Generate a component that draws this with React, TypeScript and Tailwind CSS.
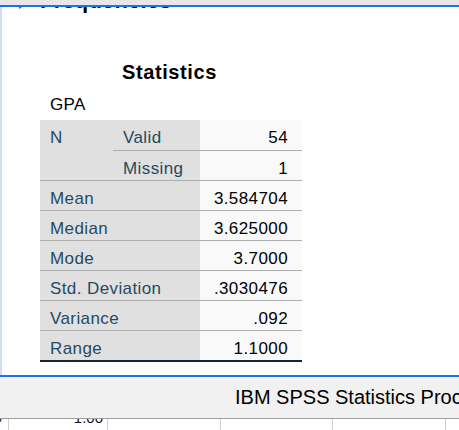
import React from "react";

const labelCls = "text-[#264a60] text-[17px] tracking-[0.4px] leading-[22px] pt-[7px]";
const valCls = "text-[#010205] text-[17px] tracking-[0.4px] leading-[22px] pt-[7px] text-right pr-[14px]";

function Row({ label, value, last }: { label: string; value: string; last?: boolean }) {
  return (
    <div className={`flex ${last ? "h-[31px] border-b-2 border-[#152935]" : "h-[30px] border-b border-[#aeaeae]"}`}>
      <div className={`w-[160px] bg-[#e0e0e0] pl-[10px] ${labelCls}`}>{label}</div>
      <div className={`w-[102px] bg-[#f9f9f9] ${valCls}`}>{value}</div>
    </div>
  );
}

export default function App() {
  return (
    <div
      className="w-[459px] h-[430px] overflow-hidden bg-white flex flex-col"
      style={{ fontFamily: '"Liberation Sans", Arial, sans-serif' }}
    >
      <div className="h-[5px] bg-[#e7e7e7] shrink-0" />
      <div className="h-[2px] bg-[#1f6ff0] shrink-0" />
      <div className="h-[368px] shrink-0 overflow-hidden border-l-2 border-[#cddff7] flex flex-col">
        <div className="flex h-[22px] mt-[-17px] items-start">
          <svg className="ml-[17px] mt-[7px]" width="10" height="12" viewBox="0 0 10 12">
            <polygon points="0,0 10,6 0,12" fill="#e8202a" />
          </svg>
          <div className="ml-[11px] text-[22px] leading-[22px] font-bold tracking-[0.2px] text-black">
            Frequencies
          </div>
        </div>
        <div className="ml-[38px] mt-[48px] w-[262px] pr-[3px] text-center text-[20px] leading-[24px] font-bold tracking-[0.6px] text-black">
          Statistics
        </div>
        <div className="ml-[48px] mt-[11px] text-[17px] leading-[20px] tracking-[0.4px] text-[#010205]">GPA</div>
        <div className="ml-[38px] mt-[5px] w-[262px] flex flex-col">
          <div className="flex">
            <div className={`w-[73px] h-[61px] bg-[#e0e0e0] border-b border-[#aeaeae] pl-[10px] ${labelCls}`}>N</div>
            <div className="flex flex-col">
              <div className="flex h-[31px] border-b border-[#aeaeae]">
                <div className={`w-[87px] bg-[#e0e0e0] pl-[10px] ${labelCls}`}>Valid</div>
                <div className={`w-[102px] bg-[#f9f9f9] ${valCls}`}>54</div>
              </div>
              <div className="flex h-[30px] border-b border-[#aeaeae]">
                <div className={`w-[87px] bg-[#e0e0e0] pl-[10px] ${labelCls}`}>Missing</div>
                <div className={`w-[102px] bg-[#f9f9f9] ${valCls}`}>1</div>
              </div>
            </div>
          </div>
          <Row label="Mean" value="3.584704" />
          <Row label="Median" value="3.625000" />
          <Row label="Mode" value="3.7000" />
          <Row label="Std. Deviation" value=".3030476" />
          <Row label="Variance" value=".092" />
          <Row label="Range" value="1.1000" last />
        </div>
      </div>
      <div className="h-[2px] bg-[#1f6ff0] shrink-0" />
      <div className="h-[41px] shrink-0 bg-[#f1f1f1] overflow-hidden whitespace-nowrap pl-[235px] text-[20px] leading-[41px] text-black">
        IBM SPSS Statistics Processor is ready
      </div>
      <div className="h-[1px] bg-[#a0a0a0] shrink-0" />
      <div className="flex h-[11px] shrink-0 overflow-hidden bg-white text-[15px] leading-[15px] text-[#101030]">
        <div className="w-[9px] border-r border-[#cfcfcf] overflow-hidden flex justify-end pr-[6px]">
          <span className="mt-[-9px]">9</span>
        </div>
        <div className="w-[99px] border-r border-[#cfcfcf] text-right pr-[4px]">
          <div className="mt-[-9px]">1.00</div>
        </div>
        <div className="w-[113px] border-r border-[#cfcfcf]" />
        <div className="w-[112px] border-r border-[#cfcfcf]" />
        <div className="w-[113px] border-r border-[#cfcfcf]" />
        <div className="flex-1" />
      </div>
    </div>
  );
}
